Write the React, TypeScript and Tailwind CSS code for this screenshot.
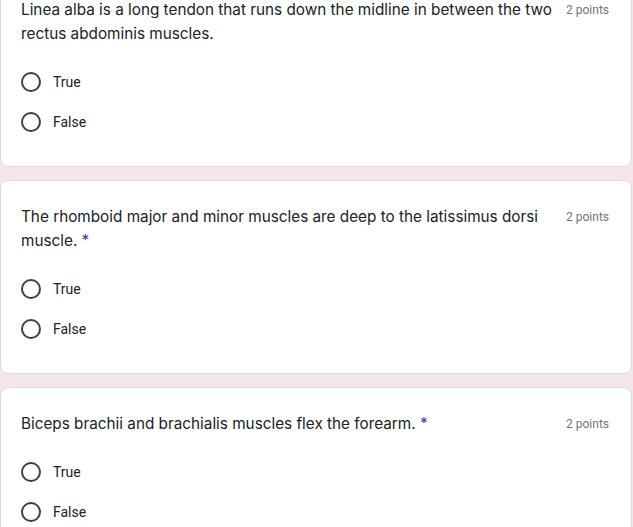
import React from "react";

type Q = { text: string; required?: boolean };

const questions: Q[] = [
  { text: "Linea alba is a long tendon that runs down the midline in between the two rectus abdominis muscles." },
  { text: "The rhomboid major and minor muscles are deep to the latissimus dorsi muscle.", required: true },
  { text: "Biceps brachii and brachialis muscles flex the forearm.", required: true },
];

function Radio({ label }: { label: string }) {
  return (
    <div className="flex items-center h-[40px]">
      <div className="w-[20px] h-[20px] rounded-full border-2 border-[#3c4043]" />
      <span
        className="ml-[12px] text-[14px] text-[#202124]"
        style={{ fontFamily: "Roboto, 'Liberation Sans', sans-serif" }}
      >
        {label}
      </span>
    </div>
  );
}

function Card({ q, first }: { q: Q; first?: boolean }) {
  return (
    <div
      className={
        "bg-white border border-[#dadce0] rounded-[8px] pl-[20px] pr-[22px] pt-[24px] pb-[24px] " +
        (first ? "-mt-[27px]" : "")
      }
    >
      <div className="flex items-start">
        <div
          className="flex-1 text-[15.3px] leading-[24px] text-[#202124]"
          style={{ fontFamily: "Inter, 'Open Sans', sans-serif" }}
        >
          {q.text}
          {q.required && <span className="text-[#2f43a0]">{"\u00a0"}*</span>}
        </div>
        <div
          className="ml-[12px] shrink-0 text-[12px] leading-[24px] text-[#70757a]"
          style={{ fontFamily: "Roboto, 'Liberation Sans', sans-serif" }}
        >
          2 points
        </div>
      </div>
      <div className="mt-[16px] flex flex-col">
        <Radio label="True" />
        <Radio label="False" />
      </div>
    </div>
  );
}

export default function App() {
  return (
    <div className="w-[633px] h-[527px] overflow-hidden bg-[#f5e6ee]">
      <div className="w-[633px] flex flex-col gap-[13px] pr-[1px]">
        {questions.map((q, i) => (
          <Card key={i} q={q} first={i === 0} />
        ))}
      </div>
    </div>
  );
}
